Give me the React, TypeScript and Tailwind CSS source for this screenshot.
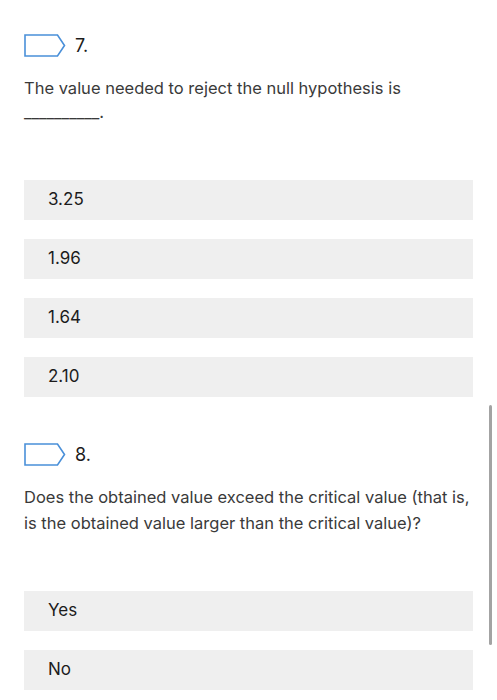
import React from 'react';

function Flag() {
    return (
        <svg width="42" height="23" viewBox="0 0 42 23" className="shrink-0">
            <path d="M1 1 H33.5 L40.5 11.5 L33.5 22 H1 Z" fill="white" stroke="#4a90d9" strokeWidth="1.6" strokeLinejoin="miter" />
        </svg>
    );
}

function Option({ label }: { label: string }) {
    return (
        <div className="h-10 bg-[#efefef] flex items-center pl-6 text-[17px] text-[#1c1c1c]">
            {label}
        </div>
    );
}

export default function App() {
    return (
        <div className="relative w-[497px] h-[700px] bg-white overflow-hidden" style={{ fontFamily: 'Inter, "Liberation Sans", sans-serif' }}>
            <div className="px-6">
                {/* Question 7 */}
                <div className="flex items-center gap-[9px] pt-[34px]">
                    <Flag />
                    <span className="text-[18px] text-[#1c1c1c] leading-none">7.</span>
                </div>
                <p className="mt-[18px] text-[16.5px] leading-[26px] text-[#3a3a3a]">
                    The value needed to reject the null hypothesis is
                </p>
                <p className="mt-[-2px] text-[16.5px] leading-[26px] text-[#3a3a3a]">
                    __________.
                </p>
                <div className="mt-[55px] flex flex-col gap-[19px]">
                    <Option label="3.25" />
                    <Option label="1.96" />
                    <Option label="1.64" />
                    <Option label="2.10" />
                </div>

                {/* Question 8 */}
                <div className="flex items-center gap-[9px] mt-[46px]">
                    <Flag />
                    <span className="text-[18px] text-[#1c1c1c] leading-none">8.</span>
                </div>
                <p className="mt-[18px] text-[16.5px] leading-[26px] text-[#3a3a3a]">
                    Does the obtained value exceed the critical value (that is, is the obtained value larger than the critical value)?
                </p>
                <div className="mt-[55px] flex flex-col gap-[19px]">
                    <Option label="Yes" />
                    <Option label="No" />
                </div>
            </div>

            {/* scrollbar */}
            <div className="absolute left-[489px] top-[405px] w-[3px] h-[240px] rounded-full bg-[#a3a3a3]" />
        </div>
    );
}
